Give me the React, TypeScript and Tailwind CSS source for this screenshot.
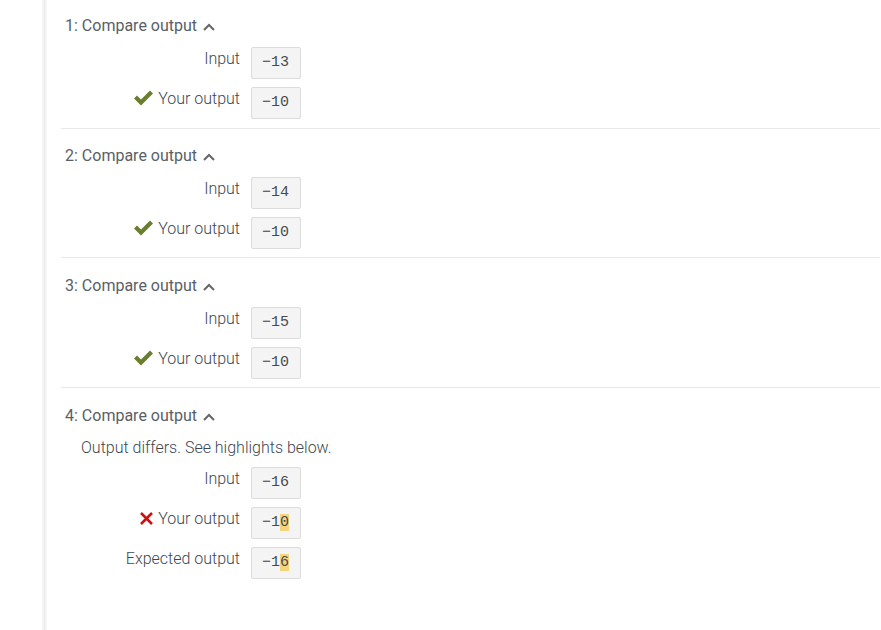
import React from "react";

const Chevron = () => (
  <svg width="14" height="10" viewBox="0 0 14 10" className="ml-[5px] mt-[2px]">
    <polyline points="2,8 7,3 12,8" fill="none" stroke="#666" strokeWidth="2" />
  </svg>
);

const Check = () => (
  <svg width="21" height="17" viewBox="0 0 21 17" className="mr-[4px] mt-[3px]">
    <path d="M1 8.5 L4 5.5 L8 9.5 L17 0.5 L20 3.5 L8 15.5 Z" fill="#6b7d2f" />
  </svg>
);

const Cross = () => (
  <svg width="15" height="15" viewBox="0 0 15 15" className="mr-[4px] mt-[4px]">
    <path d="M2 2 L13 13 M13 2 L2 13" stroke="#cc1010" strokeWidth="2.6" />
  </svg>
);

type Row = { label: string; value: string; icon?: "check" | "cross"; hl?: boolean };

const Box = ({ value, hl }: { value: string; hl?: boolean }) => {
  const main = hl ? value.slice(0, -1) : value;
  const last = hl ? value.slice(-1) : "";
  return (
    <div className="w-[50px] h-[32px] border border-[#dcdcdc] bg-[#f4f4f4] rounded-[2px] pl-[10px] pt-[3px] text-[15px] leading-[24px] text-[#4a4a4a] font-['Liberation_Mono',monospace] whitespace-pre">
      {main}
      {hl && <span className="bg-[#f5d47e]">{last}</span>}
    </div>
  );
};

const RowView = ({ r }: { r: Row }) => (
  <div className="flex items-start">
    <div className="w-[179px] flex justify-end items-start text-[16px] leading-[24px] font-light text-[#3e4750]">
      {r.icon === "check" && <Check />}
      {r.icon === "cross" && <Cross />}
      <span>{r.label}</span>
    </div>
    <div className="ml-[11px]">
      <Box value={r.value} hl={r.hl} />
    </div>
  </div>
);

const Section = ({
  n,
  rows,
  note,
  pad,
  last,
}: {
  n: number;
  rows: Row[];
  note?: string;
  pad: string;
  last?: boolean;
}) => (
  <div className={`${pad} ${last ? "" : "border-b border-[#e8e8e8]"}`}>
    <div className="flex items-center pl-[4px] text-[16px] leading-[24px] text-[#5a6066]">
      <span>{n}: Compare output</span>
      <Chevron />
    </div>
    {note && (
      <div className="pl-[20px] mt-[8px] text-[16px] leading-[24px] font-light text-[#3e4750]">{note}</div>
    )}
    <div className={`flex flex-col gap-[8px] ${note ? "mt-[7px]" : "mt-[9px]"}`}>
      {rows.map((r, i) => (
        <RowView key={i} r={r} />
      ))}
    </div>
  </div>
);

export default function App() {
  return (
    <div className="w-[881px] h-[630px] bg-white flex font-['Roboto','Liberation_Sans',sans-serif] overflow-hidden">
      <div className="w-[42px] shrink-0" />
      <div className="w-[5px] shrink-0 bg-gradient-to-r from-[#f6f6f6] via-[#eeeeee] to-[#f8f8f8]" />
      <div className="flex-1 pl-[14px] pr-[1px]">
        <Section
          n={1}
          pad="pt-[14px] pb-[9px]"
          rows={[
            { label: "Input", value: "−13" },
            { label: "Your output", value: "−10", icon: "check" },
          ]}
        />
        <Section
          n={2}
          pad="pt-[15px] pb-[8px]"
          rows={[
            { label: "Input", value: "−14" },
            { label: "Your output", value: "−10", icon: "check" },
          ]}
        />
        <Section
          n={3}
          pad="pt-[16px] pb-[8px]"
          rows={[
            { label: "Input", value: "−15" },
            { label: "Your output", value: "−10", icon: "check" },
          ]}
        />
        <Section
          n={4}
          pad="pt-[16px]"
          last
          note="Output differs. See highlights below."
          rows={[
            { label: "Input", value: "−16" },
            { label: "Your output", value: "−10", icon: "cross", hl: true },
            { label: "Expected output", value: "−16", hl: true },
          ]}
        />
      </div>
    </div>
  );
}
